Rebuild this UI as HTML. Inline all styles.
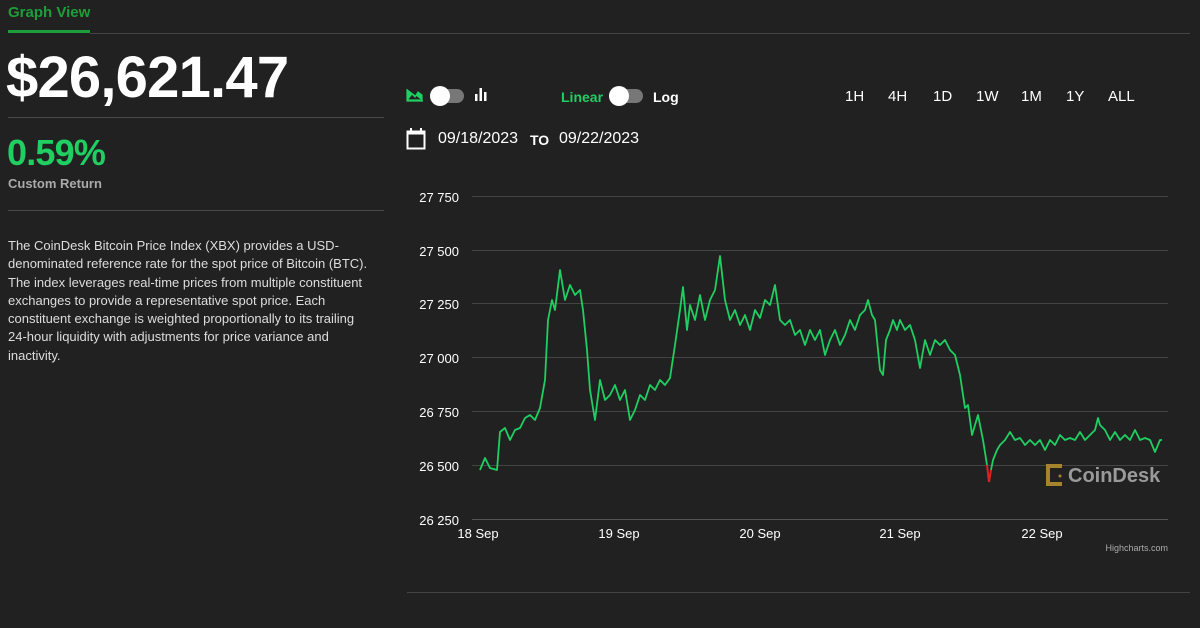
<!DOCTYPE html>
<html><head><meta charset="utf-8"><style>
body{margin:0;width:1200px;height:628px;background:#212121;font-family:"Liberation Sans",sans-serif;color:#fff;position:relative;overflow:hidden}
.a{position:absolute;white-space:nowrap}
.l{position:absolute;height:1px;background:#555}
</style></head><body>
<div class="a" style="left:8px;top:4px;font-size:15px;font-weight:bold;color:#1e9e3a">Graph View</div>
<div class="a" style="left:8px;top:30px;width:82px;height:3px;background:#1e9e3a"></div>
<div class="l" style="left:90px;top:33px;width:1100px;background:#444"></div>
<div class="a" style="left:6px;top:44px;font-size:58px;font-weight:bold;letter-spacing:-0.8px">$26,621.47</div>
<div class="l" style="left:8px;top:117px;width:376px;background:#4a4a4a"></div>
<div class="a" style="left:7px;top:132px;font-size:36px;font-weight:bold;color:#1fcf62;letter-spacing:-0.8px">0.59%</div>
<div class="a" style="left:8px;top:176px;font-size:13px;font-weight:bold;color:#aaa">Custom Return</div>
<div class="l" style="left:8px;top:210px;width:376px;background:#4a4a4a"></div>
<div class="a" style="left:8px;top:237px;width:368px;font-size:13px;line-height:18.3px;color:#ddd;white-space:normal">The CoinDesk Bitcoin Price Index (XBX) provides a USD-denominated reference rate for the spot price of Bitcoin (BTC). The index leverages real-time prices from multiple constituent exchanges to provide a representative spot price. Each constituent exchange is weighted proportionally to its trailing 24&#8209;hour liquidity with adjustments for price variance and inactivity.</div>

<svg class="a" style="left:406px;top:88px" width="18" height="14"><path d="M1 1V13H17M2 11L6 6 9 9 12 4 16 7V12H2Z" fill="#1fcf62" stroke="#1fcf62" stroke-width="1.2"/></svg>
<div class="a" style="left:430px;top:89px;width:34px;height:14px;border-radius:7px;background:#777"></div>
<div class="a" style="left:430px;top:86px;width:20px;height:20px;border-radius:10px;background:#fff"></div>
<svg class="a" style="left:474px;top:87px" width="14" height="15"><rect x="1" y="7" width="2.5" height="7" fill="#fff"/><rect x="5.5" y="1" width="2.5" height="13" fill="#fff"/><rect x="10" y="5" width="2.5" height="9" fill="#fff"/></svg>
<div class="a" style="left:561px;top:89px;font-size:14px;font-weight:bold;color:#1fcf62">Linear</div>
<div class="a" style="left:609px;top:89px;width:34px;height:14px;border-radius:7px;background:#777"></div>
<div class="a" style="left:609px;top:86px;width:20px;height:20px;border-radius:10px;background:#fff"></div>
<div class="a" style="left:653px;top:89px;font-size:14px;font-weight:bold">Log</div>
<div class="a" style="left:845px;top:88px;font-size:15px">1H</div>
<div class="a" style="left:888px;top:88px;font-size:15px">4H</div>
<div class="a" style="left:933px;top:88px;font-size:15px">1D</div>
<div class="a" style="left:976px;top:88px;font-size:15px">1W</div>
<div class="a" style="left:1021px;top:88px;font-size:15px">1M</div>
<div class="a" style="left:1066px;top:88px;font-size:15px">1Y</div>
<div class="a" style="left:1108px;top:88px;font-size:15px">ALL</div>

<svg class="a" style="left:406px;top:128px" width="20" height="22"><rect x="1.5" y="3.5" width="17" height="17" fill="none" stroke="#fff" stroke-width="2"/><rect x="1.5" y="3.5" width="17" height="3" fill="#fff"/><rect x="4" y="0" width="2" height="5" fill="#fff"/><rect x="14" y="0" width="2" height="5" fill="#fff"/></svg>
<div class="a" style="left:438px;top:130px;font-size:16px">09/18/2023</div>
<div class="a" style="left:530px;top:132px;font-size:14px;font-weight:bold">TO</div>
<div class="a" style="left:559px;top:130px;font-size:16px">09/22/2023</div>

<svg class="a" style="left:0;top:0" width="1200" height="628">
<g stroke="#444" stroke-width="1">
<line x1="472" y1="196.5" x2="1168" y2="196.5"/><line x1="472" y1="250.5" x2="1168" y2="250.5"/><line x1="472" y1="303.5" x2="1168" y2="303.5"/><line x1="472" y1="357.5" x2="1168" y2="357.5"/><line x1="472" y1="411.5" x2="1168" y2="411.5"/><line x1="472" y1="465.5" x2="1168" y2="465.5"/></g>
<line x1="472" y1="519.5" x2="1168" y2="519.5" stroke="#555"/>
<line x1="407" y1="592.5" x2="1190" y2="592.5" stroke="#444"/>
<g fill="#fff" font-size="13" text-anchor="end"><text x="459" y="202">27 750</text><text x="459" y="256">27 500</text><text x="459" y="309">27 250</text><text x="459" y="363">27 000</text><text x="459" y="417">26 750</text><text x="459" y="471">26 500</text><text x="459" y="525">26 250</text></g>
<g fill="#fff" font-size="13" text-anchor="middle"><text x="478" y="538">18 Sep</text><text x="619" y="538">19 Sep</text><text x="760" y="538">20 Sep</text><text x="900" y="538">21 Sep</text><text x="1042" y="538">22 Sep</text></g>
<text x="1168" y="551" fill="#aaa" font-size="9" text-anchor="end">Highcharts.com</text>
<g fill="#a6842f"><rect x="1046" y="464" width="4" height="22"/><rect x="1046" y="464" width="16" height="4"/><rect x="1046" y="482" width="16" height="4"/><circle cx="1060" cy="476" r="1.5"/></g>
<text x="1068" y="482" fill="#9a9a9a" font-size="20" font-weight="bold">CoinDesk</text>
<polyline fill="none" stroke="#1fcf62" stroke-width="1.8" stroke-linejoin="round" points="480,470 485,458 490,468 497,470 500,432 505,428 510,440 515,430 520,428 525,418 530,415 535,420 540,408 545,380 548,320 552,300 555,310 560,270 565,300 570,285 575,295 580,290 583,310 587,350 590,390 595,420 600,380 605,400 610,395 615,385 620,400 625,390 630,420 635,410 640,395 645,400 650,385 655,390 660,380 665,385 670,378 675,345 680,310 683,287 687,330 690,305 695,320 700,295 705,320 710,300 715,290 720,256 725,300 730,320 735,310 740,325 745,315 750,330 755,310 760,318 765,300 770,305 775,285 780,320 785,325 790,320 795,335 800,330 805,345 810,330 815,340 820,330 825,355 830,340 835,330 840,345 845,335 850,320 855,330 860,315 865,310 868,300 872,315 875,320 880,370 883,375 886,340 890,330 893,320 897,330 900,320 905,330 910,325 915,340 920,368 925,340 930,355 935,340 940,345 945,340 950,350 955,355 960,375 965,408 968,405 972,435 978,415 983,440 987,465"/>
<polyline fill="none" stroke="#d22" stroke-width="2" points="987,465 989,482 991,470"/>
<polyline fill="none" stroke="#1fcf62" stroke-width="1.8" stroke-linejoin="round" points="991,470 993,460 997,450 1000,445 1005,440 1010,432 1015,440 1020,438 1025,445 1030,440 1035,445 1040,440 1045,450 1050,440 1055,445 1060,435 1065,440 1070,438 1075,440 1080,432 1085,440 1090,435 1095,430 1098,418 1100,425 1105,430 1110,440 1115,432 1120,440 1125,435 1130,440 1135,430 1140,440 1145,438 1150,440 1155,452 1160,440 1162,440"/>
</svg>
</body></html>
